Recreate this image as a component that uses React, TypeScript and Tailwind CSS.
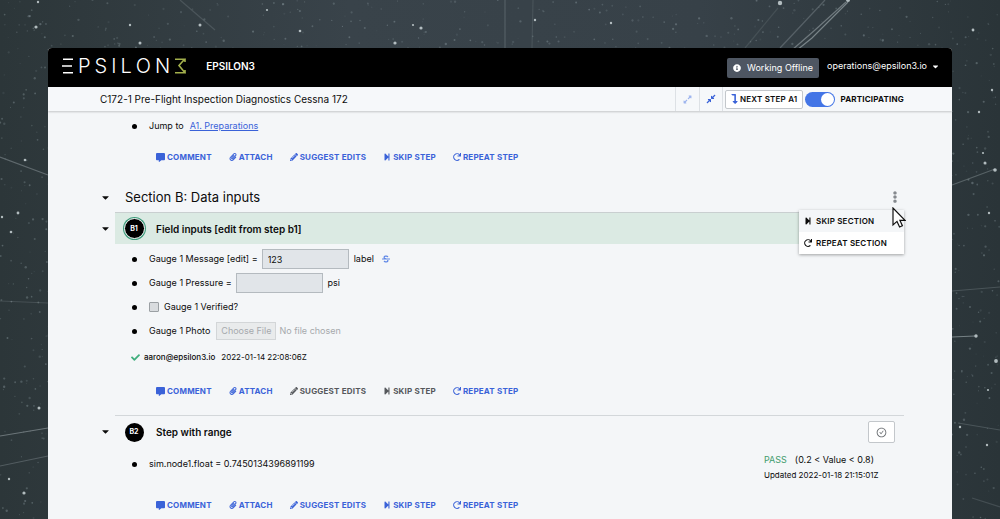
import { ReactNode, useState } from "react";
import {
  FaCaretDown,
  FaCheck,
  FaCommentAlt,
  FaCompressAlt,
  FaEllipsisV,
  FaExpandAlt,
  FaInfoCircle,
  FaLevelDownAlt,
  FaPaperclip,
  FaPencilAlt,
  FaRedo,
  FaStepForward,
  FaStrikethrough
} from "react-icons/fa";
import { AiOutlineCheckCircle } from "react-icons/ai";

const brightStars = [
  [36, 27, 1.6], [38, 2, 1.2], [130, 25, 1.2], [140, 43, 1.5], [200, 25, 1.5], [300, 31, 1.3], [395, 43, 1.6],
  [421, 28, 1.6], [413, 25, 1.1], [535, 20, 1.2], [611, 23, 1.2], [780, 3, 2.2], [848, 0, 2], [973, 30, 1.4],
  [25, 160, 1.3], [18, 213, 1.4], [11, 232, 1.3], [2, 217, 1.2], [39, 408, 1.5], [24, 493, 1.6], [9, 479, 1.2],
  [985, 163, 1.5], [995, 170, 1.8], [983, 153, 1.1], [989, 213, 1.2], [992, 90, 1.2], [976, 336, 1.7],
  [996, 361, 1.9], [979, 112, 1.2], [988, 390, 1.1], [960, 427, 1.2], [987, 445, 1.2], [267, 10, 1.1]
];

const streaks = [
  { d: "M848 2 812 38 797 50", o: 0.6 },
  { d: "M846 2 815 30 792 50", o: 0.5 },
  { d: "M825 0 780 48", o: 0.3 },
  { d: "M778 8 745 48", o: 0.15 },
  { d: "M180 0 215 30", o: 0.2 },
  { d: "M505 0V48", o: 0.25 },
  { d: "M533 0 532 48", o: 0.15 },
  { d: "M0 157 48 175", o: 0.4 },
  { d: "M0 301 48 303", o: 0.2 },
  { d: "M0 436 48 428", o: 0.5 },
  { d: "M0 466 48 456", o: 0.3 },
  { d: "M952 185 995 169", o: 0.35 },
  { d: "M952 291 1000 287", o: 0.25 },
  { d: "M952 337 975 336", o: 0.6 },
  { d: "M958 423 1000 430", o: 0.25 },
  { d: "M972 498 1000 507", o: 0.2 }
];

// fixed seed so the sky is the same on every render
function scatterStars(count: number) {
  let seed = 17;
  const next = () => {
    seed = (seed * 16807) % 2147483647;
    return seed / 2147483647;
  };
  return Array.from({ length: count }, () => ({
    x: next() * 1000,
    y: next() * 519,
    r: 0.5 + next() * 0.7,
    o: 0.08 + next() * 0.27
  }));
}

const dimStars = scatterStars(3200);

function StarField() {
  return (
    <svg
      aria-hidden="true"
      viewBox="0 0 1000 519"
      preserveAspectRatio="xMidYMid slice"
      className="absolute inset-0 h-full w-full"
    >
      <defs>
        <linearGradient id="sky" x1="0" x2="1">
          <stop offset="0" stopColor="#2c3639" />
          <stop offset="0.35" stopColor="#39434a" />
          <stop offset="0.7" stopColor="#374148" />
          <stop offset="1" stopColor="#2a3438" />
        </linearGradient>
      </defs>
      <rect width="1000" height="519" fill="url(#sky)" />
      {dimStars.map((star, i) => (
        <circle key={i} cx={star.x} cy={star.y} r={star.r} fill="#a9bac0" opacity={star.o} />
      ))}
      {streaks.map(({ d, o }) => (
        <path key={d} d={d} fill="none" stroke="#a9b4b8" strokeWidth="1.2" opacity={o} />
      ))}
      {brightStars.map(([x, y, r]) => (
        <circle key={`${x}-${y}`} cx={x} cy={y} r={r} fill="#d3dde0" opacity="0.8" />
      ))}
    </svg>
  );
}

function Logo() {
  return (
    <a href="#home" aria-label="Epsilon3 home" className="flex items-center gap-[5px] text-white">
      <svg viewBox="0 0 11 16" className="h-4 w-[11px]" fill="none" stroke="currentColor" strokeWidth="1.4">
        <path d="M1 1.2h10M0 8h10M1 14.8h10" />
      </svg>
      <span className="flex gap-[4px] text-[20px] leading-4 font-light">
        <span>P</span>
        <span>S</span>
        <span>I</span>
        <span>L</span>
        <span>O</span>
        <span>N</span>
      </span>
      <svg viewBox="0 0 11 16" className="h-4 w-[11px]" fill="none" stroke="#a3b04c" strokeWidth="1.6">
        <path d="M0 1.2h9.5L4 7.5l6 7.3H0M10 1v3M10 12v3" />
      </svg>
    </a>
  );
}

type ActionProps = { icon: ReactNode; label: string; muted?: boolean };

function Action({ icon, label, muted }: ActionProps) {
  return (
    <button
      type="button"
      disabled={muted}
      className={`flex items-center gap-0.5 text-[8px] leading-3 font-bold tracking-wide ${
        muted ? "text-[#55585c]" : "text-[#3a62d8]"
      }`}
    >
      {icon}
      {label}
    </button>
  );
}

function StepActions({ locked }: { locked?: boolean }) {
  return (
    <div className="flex h-3 items-center gap-[17px] pl-[41px]">
      <Action icon={<FaCommentAlt className="size-[9px]" />} label="COMMENT" />
      <Action icon={<FaPaperclip className="size-2" />} label="ATTACH" />
      <Action icon={<FaPencilAlt className="size-2" />} label="SUGGEST EDITS" muted={locked} />
      <Action icon={<FaStepForward className="size-2" />} label="SKIP STEP" muted={locked} />
      <Action icon={<FaRedo className="size-2" />} label="REPEAT STEP" />
    </div>
  );
}

function Row({ children }: { children: ReactNode }) {
  return (
    <li className="flex h-6 items-center text-[9px]">
      <span className="flex w-[34px] shrink-0 justify-center pl-1">
        <span className="size-[5px] rounded-full bg-black" />
      </span>
      {children}
    </li>
  );
}

function Toggle({ label }: { label: string }) {
  return (
    <button type="button" aria-label={label} className="flex w-[19px] shrink-0 justify-center">
      <FaCaretDown className="size-[11px]" />
    </button>
  );
}

const fieldClass = "h-5 w-[87px] border border-[#b4babf] bg-[#e1e5e9] px-[5px] text-[9px]";

export default function App() {
  const [participating, setParticipating] = useState(true);
  const [menuOpen, setMenuOpen] = useState(true);

  return (
    <div className="relative flex h-screen flex-col overflow-hidden bg-[#323c41] px-12 pt-12 font-['Inter','Liberation_Sans',sans-serif] text-[10px] leading-4 text-[#0c0c0c]">
      <StarField />
      <div className="relative flex min-h-0 flex-1 flex-col overflow-hidden rounded-t-[4px] bg-[#f4f6f8]">
        <header className="flex h-[39px] shrink-0 items-center bg-black pr-3 pb-[3px] pl-3.5 text-white">
          <Logo />
          <span className="ml-5 font-semibold">EPSILON3</span>
          <div className="ml-auto flex items-center gap-2">
            <div className="mt-1 flex h-5 items-center gap-1.5 rounded-[2px] bg-[#4e5662] px-1.5 text-[9px]">
              <FaInfoCircle className="size-2" />
              Working Offline
            </div>
            <button type="button" className="flex items-center gap-1 text-[9px]">
              operations@epsilon3.io
              <FaCaretDown className="size-[9px]" />
            </button>
          </div>
        </header>

        <div className="z-10 flex h-6 shrink-0 items-center bg-[#f6f8fa] pr-12 pl-[52px] shadow-[0_1px_2px_rgba(0,0,0,0.2)]">
          <h1>C172-1 Pre-Flight Inspection Diagnostics Cessna 172</h1>
          <div className="ml-auto flex h-full items-center">
            <button
              type="button"
              aria-label="Expand all"
              className="flex h-full w-6 items-center justify-center border-l border-[#dde1e5] text-[#9db4ee]"
            >
              <FaExpandAlt className="size-[9px]" />
            </button>
            <button
              type="button"
              aria-label="Collapse all"
              className="flex h-full w-6 items-center justify-center border-x border-[#dde1e5] text-[#3a62d8]"
            >
              <FaCompressAlt className="size-[10px]" />
            </button>
            <button
              type="button"
              className="ml-0.5 flex h-[19px] items-center gap-0.5 rounded-[2px] border border-[#c3c7cb] bg-white px-[5px] text-[8px] font-semibold tracking-wide"
            >
              <FaLevelDownAlt className="h-[10px] w-[7px] text-[#3a62d8]" />
              NEXT STEP A1
            </button>
            <label className="ml-0.5 flex items-center gap-[5px] text-[8px] font-bold tracking-wide">
              <input
                type="checkbox"
                role="switch"
                checked={participating}
                onChange={(event) => setParticipating(event.target.checked)}
                className="h-[15px] w-[30px] appearance-none rounded-full bg-gray-400 p-px before:block before:size-[13px] before:rounded-full before:bg-white checked:bg-[#4375e6] checked:before:ml-[15px]"
              />
              PARTICIPATING
            </label>
          </div>
        </div>

        <main className="min-h-0 flex-1 overflow-hidden pr-12 pl-12">
          <div className="pt-[3px] pl-[19px]">
            <ul>
              <Row>
                Jump to
                <a href="#a1" className="ml-[6px] text-[#3a62d8] underline">
                  A1. Preparations
                </a>
              </Row>
            </ul>
            <div className="pt-[13px]">
              <StepActions />
            </div>
          </div>

          <section className="pt-6">
            <div className="relative flex h-5 items-center">
              <Toggle label="Collapse section B" />
              <h2 className="pl-2.5 text-[13px] leading-5">Section B: Data inputs</h2>
              <button
                type="button"
                aria-label="Section options"
                aria-expanded={menuOpen}
                onClick={() => setMenuOpen(!menuOpen)}
                className="ml-auto flex w-[18px] justify-center text-[#85898e]"
              >
                <FaEllipsisV className="size-3" />
              </button>
              {menuOpen && (
                <div className="absolute top-[23px] right-0 z-10 w-[105px] bg-white text-[8px] font-semibold tracking-wide shadow-[0_1px_3px_rgba(0,0,0,0.35)]">
                  <button type="button" className="flex h-[22px] w-full items-center gap-1 bg-[#f4f6f8] px-[5px]">
                    <FaStepForward className="size-2" />
                    SKIP SECTION
                  </button>
                  <button type="button" className="flex h-[22px] w-full items-center gap-1 px-[5px]">
                    <FaRedo className="size-2" />
                    REPEAT SECTION
                  </button>
                </div>
              )}
              <svg
                aria-hidden="true"
                viewBox="0 0 14 21"
                className="absolute top-5 -right-0.5 z-20 h-[21px] w-[14px]"
                fill="white"
                stroke="#111"
                strokeWidth="1.2"
              >
                <path d="M1 1v17l4-3.6 2.6 5.6 2.8-1.2-2.5-5.5H13z" />
              </svg>
            </div>

            <article className="mt-[5px]">
              <div className="flex items-center">
                <Toggle label="Collapse step B1" />
                <div className="flex h-8 flex-1 items-center border-t border-[#c9cfd0] bg-[#dbeae3]">
                  <span className="flex w-[38px] justify-center">
                    <span className="flex size-[21px] items-center justify-center rounded-full border border-white bg-black text-[7px] font-bold text-white ring-1 ring-[#3d9b7b]">
                      B1
                    </span>
                  </span>
                  <h3 className="pl-[3px] font-semibold">Field inputs [edit from step b1]</h3>
                </div>
              </div>
              <div className="pt-[3px] pl-[19px]">
                <ul>
                  <Row>
                    <label htmlFor="message">Gauge 1 Message [edit] =</label>
                    <input id="message" defaultValue="123" className={`mr-[5px] ml-1 ${fieldClass}`} />
                    label
                    <FaStrikethrough className="ml-2 size-2 text-[#5f87e6]" />
                  </Row>
                  <Row>
                    <label htmlFor="pressure">Gauge 1 Pressure =</label>
                    <input id="pressure" className={`mr-[5px] ml-1 ${fieldClass}`} />
                    psi
                  </Row>
                  <Row>
                    <input
                      id="verified"
                      type="checkbox"
                      className="size-[10px] appearance-none rounded-[1px] border border-[#9ba0a4] bg-[#d9dcdf]"
                    />
                    <label htmlFor="verified" className="ml-[5px]">
                      Gauge 1 Verified?
                    </label>
                  </Row>
                  <Row>
                    <label htmlFor="photo">Gauge 1 Photo</label>
                    <input
                      id="photo"
                      type="file"
                      disabled
                      className="ml-[6px] text-[#a6a9ac] file:mr-[3px] file:h-[18px] file:border file:border-solid file:border-[#d3d6d8] file:bg-[#e9ebec] file:px-1 file:text-[#a6a9ac]"
                    />
                  </Row>
                </ul>
                <p className="mt-1.5 flex h-4 items-center pl-4 text-[8px]">
                  <FaCheck className="mr-1 size-[9px] text-[#3fae7d]" />
                  <span className="mr-[6px] font-medium">aaron@epsilon3.io</span>
                  2022-01-14 22:08:06Z
                </p>
                <div className="pt-5 pb-[18px]">
                  <StepActions locked />
                </div>
              </div>
            </article>

            <article>
              <div className="flex items-center">
                <Toggle label="Collapse step B2" />
                <div className="flex h-[33px] flex-1 items-center border-t border-[#d3d7da]">
                  <span className="flex w-[38px] justify-center">
                    <span className="flex size-[19px] items-center justify-center rounded-full bg-black text-[7px] font-bold text-white">
                      B2
                    </span>
                  </span>
                  <h3 className="pl-[3px] font-semibold">Step with range</h3>
                  <button
                    type="button"
                    aria-label="Complete step"
                    className="mr-[9px] ml-auto flex h-[22px] w-[27px] items-center justify-center rounded-[2px] border border-[#c3c7cb] bg-white text-[#63676b]"
                  >
                    <AiOutlineCheckCircle className="size-[11px]" />
                  </button>
                </div>
              </div>
              <div className="pl-[19px]">
                <div className="flex pt-1">
                  <ul className="flex-1">
                    <Row>sim.node1.float = 0.7450134396891199</Row>
                  </ul>
                  <div className="w-[140px]">
                    <p className="text-[9px]">
                      <span className="mr-2 text-[#3f9c6d]">PASS</span>
                      (0.2 &lt; Value &lt; 0.8)
                    </p>
                    <p className="text-[8px] leading-[14px]">Updated 2022-01-18 21:15:01Z</p>
                  </div>
                </div>
                <div className="pt-[17px]">
                  <StepActions />
                </div>
              </div>
            </article>
          </section>
        </main>
      </div>
    </div>
  );
}
